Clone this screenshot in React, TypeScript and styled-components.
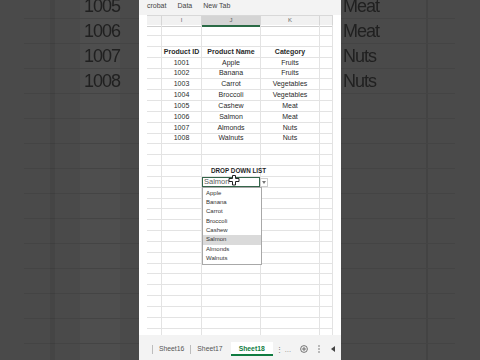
import styled, { createGlobalStyle } from "styled-components";

const GlobalStyle = createGlobalStyle`
  html, body {
    margin: 0;
    padding: 0;
    background: #4a4a4a;
  }
  #root {
    width: 480px;
    height: 360px;
    overflow: hidden;
  }
`;

const Screen = styled.div`
  display: flex;
  width: 480px;
  height: 360px;
  background: #4a4a4a;
  font-family: "Liberation Sans", Arial, sans-serif;
  overflow: hidden;
`;

/* blurred zoomed copy of the video behind the short */
const Backdrop = styled.div<{ $side: "left" | "right" }>`
  width: 139px;
  flex: none;
  overflow: hidden;
  background-image: ${(p) =>
    p.$side === "left"
      ? "linear-gradient(to right, transparent 50px, rgba(0,0,0,0.07) 50px, rgba(0,0,0,0.07) 55px, transparent 55px)"
      : "none"};
`;

const BackRows = styled.div`
  margin-top: -6px;
  display: flex;
  flex-direction: column;
`;

const BackRow = styled.div<{ $side: "left" | "right" }>`
  height: 25px;
  flex: none;
  box-sizing: border-box;
  display: flex;
  justify-content: ${(p) => (p.$side === "left" ? "flex-end" : "flex-start")};
  padding-right: ${(p) => (p.$side === "left" ? "19px" : "0")};
  margin-left: ${(p) => (p.$side === "left" ? "24px" : "0")};
  margin-right: ${(p) => (p.$side === "right" ? "25px" : "0")};
  border-bottom: 1px solid rgba(0, 0, 0, 0.08);
`;

const BackCell = styled.div<{ $side: "left" | "right" }>`
  width: ${(p) => (p.$side === "left" ? "40px" : "87px")};
  box-sizing: border-box;
  height: 24px;
  font-size: 18px;
  line-height: 25px;
  letter-spacing: -1px;
  color: #202020;
  text-align: ${(p) => (p.$side === "left" ? "right" : "left")};
  padding-left: ${(p) => (p.$side === "right" ? "2px" : "0")};
  background: ${(p) => (p.$side === "left" ? "rgba(255,255,255,0.025)" : "transparent")};
  border-right: ${(p) => (p.$side === "right" ? "2px solid rgba(0,0,0,0.09)" : "none")};
  filter: blur(0.6px);
`;

const Panel = styled.div`
  width: 202px;
  flex: none;
  background: #ffffff;
  display: flex;
  flex-direction: column;
`;

const Ribbon = styled.div`
  height: 15px;
  flex: none;
  box-sizing: border-box;
  background: #f3f3f3;
  display: flex;
  gap: 11px;
  padding: 2px 0 0 8px;
  font-size: 7px;
  line-height: 8px;
  color: #444;
`;

const ColumnHeaders = styled.div`
  display: grid;
  grid-template-columns: 15px 40px 59px 59px 13px;
  height: 10px;
  flex: none;
  margin: 0 8px;
  background: #f1f1f1;
  border-top: 1px solid #d8d8d8;
  box-sizing: border-box;
`;

const HeaderCell = styled.div<{ $active?: boolean }>`
  box-sizing: border-box;
  border-right: 1px solid #d6d6d6;
  border-bottom: ${(p) => (p.$active ? "2px solid #2a6a45" : "1px solid #cfcfcf")};
  background: ${(p) => (p.$active ? "#d4d4d4" : "transparent")};
  font-size: 6px;
  line-height: 9px;
  text-align: center;
  color: #666;
`;

const Sheet = styled.div`
  flex: 1;
  overflow: hidden;
  margin: 0 8px;
  display: flex;
  flex-direction: column;
`;

const Row = styled.div`
  display: grid;
  grid-template-columns: 15px 40px 59px 59px 13px;
  height: 10.85px;
  flex: none;
`;

const Cell = styled.div<{ $bold?: boolean }>`
  box-sizing: border-box;
  border-right: 1px solid #e3e3e3;
  border-bottom: 1px solid #e3e3e3;
  font-size: 7px;
  line-height: 10px;
  text-align: center;
  color: #2a2a2a;
  font-weight: ${(p) => (p.$bold ? 700 : 400)};
  white-space: nowrap;
`;

const TitleCell = styled(Cell)`
  text-align: left;
  padding-left: 9px;
  font-size: 6.3px;
  font-weight: 700;
  color: #1f1f1f;
`;

const SelectCell = styled(Cell)`
  position: relative;
  z-index: 3;
  text-align: left;
  padding-left: 2px;
  font-size: 7.5px;
  color: #5c5c5c;
  box-shadow: inset 0 0 0 1px #35654a;
`;

const ArrowButton = styled.div`
  position: absolute;
  left: 100%;
  top: 1px;
  width: 8px;
  height: 9px;
  box-sizing: border-box;
  border: 1px solid #cfcfcf;
  background: #fff;
  display: flex;
  align-items: center;
  justify-content: center;
`;

const DropList = styled.div`
  position: absolute;
  top: 100%;
  left: 0;
  width: 60px;
  box-sizing: border-box;
  padding: 1px 0 1px;
  background: #fff;
  border: 1px solid #a8a8a8;
  display: flex;
  flex-direction: column;
`;

const DropItem = styled.div<{ $active?: boolean }>`
  height: 9.3px;
  line-height: 9.3px;
  padding-left: 3px;
  font-size: 6px;
  color: #333;
  background: ${(p) => (p.$active ? "#dadada" : "transparent")};
`;

const Cursor = styled.svg`
  position: absolute;
  left: 26px;
  top: -2px;
`;

const TabBar = styled.div`
  height: 25px;
  flex: none;
  background: #f3f3f3;
  display: flex;
  align-items: flex-start;
  padding: 7px 0 0 13px;
  box-sizing: border-box;
  font-size: 6.8px;
  color: #555;
`;

const TabSep = styled.div`
  width: 1px;
  height: 9px;
  margin-top: 3px;
  background: #bdbdbd;
`;

const Tab = styled.div<{ $active?: boolean }>`
  height: 14px;
  box-sizing: border-box;
  line-height: 13px;
  padding: 0 ${(p) => (p.$active ? "8px" : "6px")};
  margin-left: ${(p) => (p.$active ? "2px" : "0")};
  background: ${(p) => (p.$active ? "#ffffff" : "transparent")};
  border-bottom: ${(p) => (p.$active ? "2px solid #107c41" : "none")};
  color: ${(p) => (p.$active ? "#107c41" : "#555")};
  font-weight: ${(p) => (p.$active ? 700 : 400)};
  white-space: nowrap;
`;

const TabTool = styled.div<{ $gap: number }>`
  margin-left: ${(p) => p.$gap}px;
  height: 14px;
  display: flex;
  align-items: center;
  color: #777;
  line-height: 13px;
`;

const products = [
  ["1001", "Apple", "Fruits"],
  ["1002", "Banana", "Fruits"],
  ["1003", "Carrot", "Vegetables"],
  ["1004", "Broccoli", "Vegetables"],
  ["1005", "Cashew", "Meat"],
  ["1006", "Salmon", "Meat"],
  ["1007", "Almonds", "Nuts"],
  ["1008", "Walnuts", "Nuts"],
];

const options = products.map((p) => p[1]);
const ROWS = 29;

const PlusCursor = () => (
  <Cursor width="12" height="11" viewBox="0 0 12 11">
    <path
      d="M4.5 0.5h3v3h3.5v3h-3.5v3.5h-3v-3.5h-3.5v-3h3.5z"
      fill="#fff"
      stroke="#222"
      strokeWidth="1"
    />
  </Cursor>
);

const App = () => {
  const rows = Array.from({ length: ROWS }, (_, r) => {
    if (r === 2) {
      return (
        <Row key={r}>
          <Cell />
          <Cell $bold>Product ID</Cell>
          <Cell $bold>Product Name</Cell>
          <Cell $bold>Category</Cell>
          <Cell />
        </Row>
      );
    }
    if (r >= 3 && r <= 10) {
      const [id, name, cat] = products[r - 3];
      return (
        <Row key={r}>
          <Cell />
          <Cell>{id}</Cell>
          <Cell>{name}</Cell>
          <Cell>{cat}</Cell>
          <Cell />
        </Row>
      );
    }
    if (r === 13) {
      return (
        <Row key={r}>
          <Cell />
          <Cell />
          <TitleCell>DROP DOWN LIST</TitleCell>
          <Cell />
          <Cell />
        </Row>
      );
    }
    if (r === 14) {
      return (
        <Row key={r}>
          <Cell />
          <Cell />
          <SelectCell>
            Salmon
            <PlusCursor />
            <ArrowButton>
              <svg width="4" height="3" viewBox="0 0 4 3">
                <path d="M0 0h4L2 3z" fill="#777" />
              </svg>
            </ArrowButton>
            <DropList>
              {options.map((o) => (
                <DropItem key={o} $active={o === "Salmon"}>
                  {o}
                </DropItem>
              ))}
            </DropList>
          </SelectCell>
          <Cell />
          <Cell />
        </Row>
      );
    }
    return (
      <Row key={r}>
        <Cell />
        <Cell />
        <Cell />
        <Cell />
        <Cell />
      </Row>
    );
  });

  const leftBack = ["1005", "1006", "1007", "1008", "", "", "", "", "", "", "", "", "", "", "", ""];
  const rightBack = ["Meat", "Meat", "Nuts", "Nuts", "", "", "", "", "", "", "", "", "", "", "", ""];

  return (
    <>
      <GlobalStyle />
      <Screen>
        <Backdrop $side="left">
          <BackRows>
            {leftBack.map((t, i) => (
              <BackRow key={i} $side="left">
                <BackCell $side="left">{t}</BackCell>
              </BackRow>
            ))}
          </BackRows>
        </Backdrop>

        <Panel>
          <Ribbon>
            <span>crobat</span>
            <span>Data</span>
            <span>New Tab</span>
          </Ribbon>
          <ColumnHeaders>
            <HeaderCell />
            <HeaderCell>I</HeaderCell>
            <HeaderCell $active>J</HeaderCell>
            <HeaderCell>K</HeaderCell>
            <HeaderCell />
          </ColumnHeaders>
          <Sheet>{rows}</Sheet>
          <TabBar>
            <TabSep />
            <Tab>Sheet16</Tab>
            <TabSep />
            <Tab>Sheet17</Tab>
            <Tab $active>Sheet18</Tab>
            <TabTool $gap={3}>⋮ …</TabTool>
            <TabTool $gap={9}>
              <svg width="8" height="8" viewBox="0 0 8 8">
                <circle cx="4" cy="4" r="3.4" fill="none" stroke="#555" strokeWidth="0.8" />
                <path d="M4 2v4M2 4h4" stroke="#555" strokeWidth="0.8" />
              </svg>
            </TabTool>
            <TabTool $gap={10}>
              <svg width="2" height="8" viewBox="0 0 2 8">
                <circle cx="1" cy="1" r="0.7" fill="#555" />
                <circle cx="1" cy="4" r="0.7" fill="#555" />
                <circle cx="1" cy="7" r="0.7" fill="#555" />
              </svg>
            </TabTool>
            <TabTool $gap={11}>
              <svg width="4" height="6" viewBox="0 0 4 6">
                <path d="M4 0v6L0 3z" fill="#444" />
              </svg>
            </TabTool>
          </TabBar>
        </Panel>

        <Backdrop $side="right">
          <BackRows>
            {rightBack.map((t, i) => (
              <BackRow key={i} $side="right">
                <BackCell $side="right">{t}</BackCell>
              </BackRow>
            ))}
          </BackRows>
        </Backdrop>
      </Screen>
    </>
  );
};

export default App;
